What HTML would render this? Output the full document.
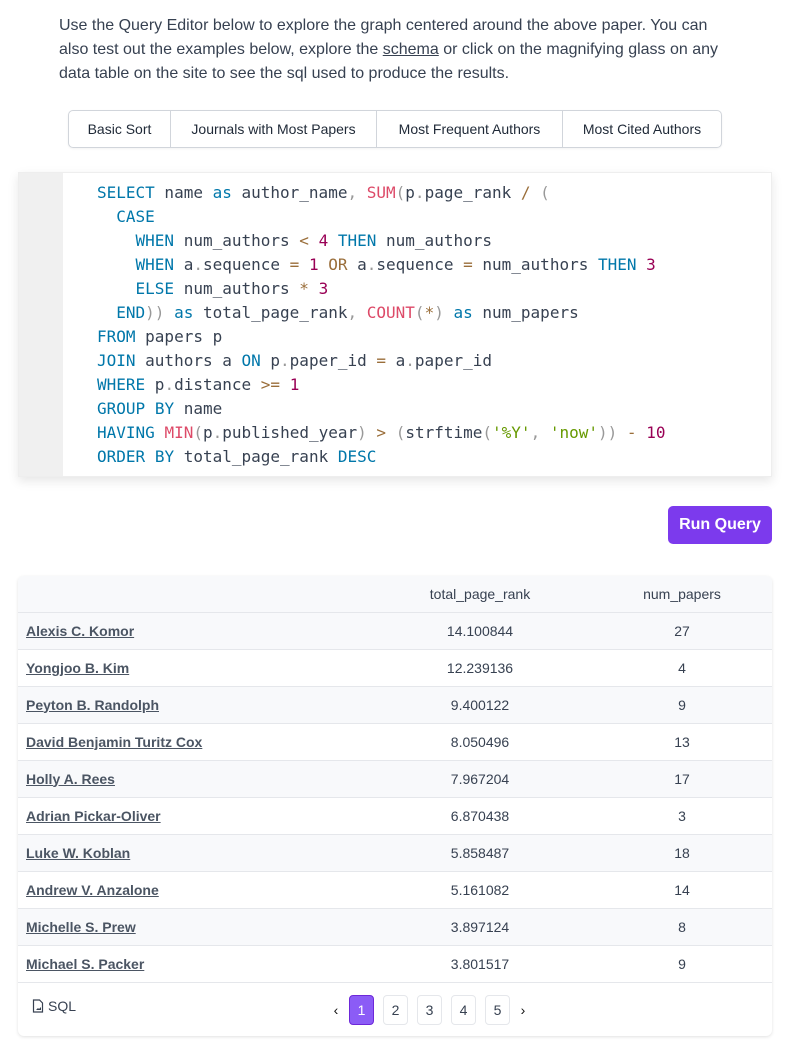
<!DOCTYPE html>
<html><head><meta charset="utf-8"><style>
*{box-sizing:border-box;margin:0;padding:0}
body{width:788px;height:1048px;background:#fff;font-family:"Liberation Sans",Helvetica,Arial,sans-serif;color:#374151;position:relative;overflow:hidden}
.intro{position:absolute;left:59px;top:14px;width:672px;font-size:16px;line-height:24px;color:#374151}
.intro u{text-decoration:underline}
.tabs{position:absolute;left:68px;top:110px;height:38px;width:654px;border:1px solid #d1d5db;border-radius:5px;display:flex;font-size:14px;color:#1f2937;box-shadow:0 1px 2px rgba(0,0,0,.05)}
.tabs div{display:flex;align-items:center;justify-content:center;border-right:1px solid #d1d5db;height:100%}
.tabs div:last-child{border-right:none}
.code{position:absolute;left:18px;top:172px;width:754px;height:305px;background:#fff;border:1px solid #eee;box-shadow:0 4px 10px rgba(0,0,0,.1)}
.gutter{position:absolute;left:0;top:0;width:44px;height:100%;background:#f0f0f0}
pre{position:absolute;left:78px;top:8px;font-family:"DejaVu Sans Mono",monospace;font-size:16px;line-height:24px;color:#374151}
.k{color:#07a}.f{color:#dd4a68}.n{color:#905}.o{color:#9a6e3a}.s{color:#690}.p{color:#999}
.btn{position:absolute;left:668px;top:506px;width:104px;height:38px;background:#7c3aed;border-radius:5px;color:#fff;font-size:16px;font-weight:bold;display:flex;align-items:center;justify-content:center}
.tbl{position:absolute;left:18px;top:576px;width:754px;border-radius:6px;box-shadow:0 1px 3px rgba(0,0,0,.12);overflow:hidden;background:#fff}
table{border-collapse:collapse;width:100%;font-size:14px}
th{height:36px;background:#f8f9fb;font-weight:normal;color:#374151;border-bottom:1px solid #e5e7eb}
td{height:37px;border-bottom:1px solid #e5e7eb;text-align:center;color:#374151}
td:first-child{text-align:left;padding-left:8px;font-weight:bold;text-decoration:underline;color:#4b5563}
tr:nth-child(even) td{background:#f8f9fb}
.foot{height:53px;position:relative;font-size:14px}
.sql{position:absolute;left:14px;top:15px;display:flex;align-items:center;gap:4px;color:#374151}
.pg{position:absolute;left:314px;top:12px;display:flex;align-items:center;gap:9px}
.pg span{width:25px;height:30px;border:1px solid #e5e7eb;border-radius:4px;display:flex;align-items:center;justify-content:center;color:#374151}
.pg span.a{background:#8b5cf6;color:#fff;border-color:#6d28d9}
.pg i{font-style:normal;width:8px;text-align:center;color:#111}
</style></head><body>
<div class="intro">Use the Query Editor below to explore the graph centered around the above paper. You can also test out the examples below, explore the <u>schema</u> or click on the magnifying glass on any data table on the site to see the sql used to produce the results.</div>
<div class="tabs"><div style="width:102px">Basic Sort</div><div style="width:206px">Journals with Most Papers</div><div style="width:186px">Most Frequent Authors</div><div style="flex:1">Most Cited Authors</div></div>
<div class="code"><div class="gutter"></div><pre><span class="k">SELECT</span> name <span class="k">as</span> author_name<span class="p">,</span> <span class="f">SUM</span><span class="p">(</span>p<span class="p">.</span>page_rank <span class="o">/</span> <span class="p">(</span>
  <span class="k">CASE</span>
    <span class="k">WHEN</span> num_authors <span class="o">&lt;</span> <span class="n">4</span> <span class="k">THEN</span> num_authors
    <span class="k">WHEN</span> a<span class="p">.</span>sequence <span class="o">=</span> <span class="n">1</span> <span class="o">OR</span> a<span class="p">.</span>sequence <span class="o">=</span> num_authors <span class="k">THEN</span> <span class="n">3</span>
    <span class="k">ELSE</span> num_authors <span class="o">*</span> <span class="n">3</span>
  <span class="k">END</span><span class="p">))</span> <span class="k">as</span> total_page_rank<span class="p">,</span> <span class="f">COUNT</span><span class="p">(</span><span class="o">*</span><span class="p">)</span> <span class="k">as</span> num_papers
<span class="k">FROM</span> papers p
<span class="k">JOIN</span> authors a <span class="k">ON</span> p<span class="p">.</span>paper_id <span class="o">=</span> a<span class="p">.</span>paper_id
<span class="k">WHERE</span> p<span class="p">.</span>distance <span class="o">&gt;=</span> <span class="n">1</span>
<span class="k">GROUP</span> <span class="k">BY</span> name
<span class="k">HAVING</span> <span class="f">MIN</span><span class="p">(</span>p<span class="p">.</span>published_year<span class="p">)</span> <span class="o">&gt;</span> <span class="p">(</span>strftime<span class="p">(</span><span class="s">'%Y'</span><span class="p">,</span> <span class="s">'now'</span><span class="p">))</span> <span class="o">-</span> <span class="n">10</span>
<span class="k">ORDER</span> <span class="k">BY</span> total_page_rank <span class="k">DESC</span></pre></div>
<div class="btn">Run Query</div>
<div class="tbl"><table>
<tr><th style="width:350px"></th><th style="width:224px">total_page_rank</th><th>num_papers</th></tr>
<tr><td>Alexis C. Komor</td><td>14.100844</td><td>27</td></tr>
<tr><td>Yongjoo B. Kim</td><td>12.239136</td><td>4</td></tr>
<tr><td>Peyton B. Randolph</td><td>9.400122</td><td>9</td></tr>
<tr><td>David Benjamin Turitz Cox</td><td>8.050496</td><td>13</td></tr>
<tr><td>Holly A. Rees</td><td>7.967204</td><td>17</td></tr>
<tr><td>Adrian Pickar-Oliver</td><td>6.870438</td><td>3</td></tr>
<tr><td>Luke W. Koblan</td><td>5.858487</td><td>18</td></tr>
<tr><td>Andrew V. Anzalone</td><td>5.161082</td><td>14</td></tr>
<tr><td>Michelle S. Prew</td><td>3.897124</td><td>8</td></tr>
<tr><td>Michael S. Packer</td><td>3.801517</td><td>9</td></tr>
</table>
<div class="foot"><div class="sql"><svg width="12" height="14" viewBox="0 0 12 14"><path d="M1.5 1h6l3 3v9h-9z" fill="none" stroke="#374151" stroke-width="1.2"/><path d="M4 11l2-2 1 1 2-2v3z" fill="#374151"/></svg> SQL</div>
<div class="pg"><i>‹</i><span class="a">1</span><span>2</span><span>3</span><span>4</span><span>5</span><i>›</i></div></div>
</div>
</body></html>
